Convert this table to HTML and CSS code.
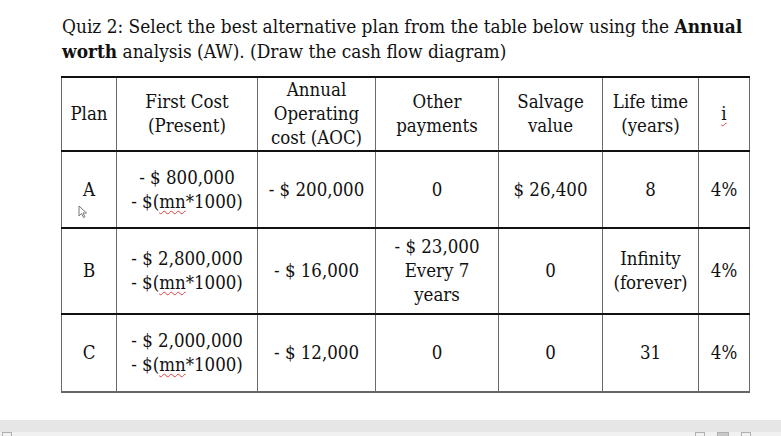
FILE: index.html
```html
<!DOCTYPE html>
<html>
<head>
<meta charset="utf-8">
<link rel="stylesheet" href="styles.css">
</head>
<body>
<div class="page">
  <div class="doc">
    <p class="title">Quiz 2: Select the best alternative plan from the table below using the <b>Annual</b><br><b>worth</b> analysis (AW). (Draw the cash flow diagram)</p>
    <table class="grid">
      <colgroup>
        <col class="c1"><col class="c2"><col class="c3"><col class="c4"><col class="c5"><col class="c6"><col class="c7">
      </colgroup>
      <tr class="head">
        <td>Plan</td>
        <td>First Cost<br>(Present)</td>
        <td>Annual<br>Operating<br>cost (AOC)</td>
        <td>Other<br>payments</td>
        <td>Salvage<br>value</td>
        <td>Life time<br>(years)</td>
        <td><span class="spell">i</span></td>
      </tr>
      <tr class="ra">
        <td>A</td>
        <td>- $ 800,000<br>- $(<span class="spell">mn</span>*1000)</td>
        <td>- $ 200,000</td>
        <td>0</td>
        <td>$ 26,400</td>
        <td>8</td>
        <td>4%</td>
      </tr>
      <tr class="rb">
        <td>B</td>
        <td>- $ 2,800,000<br>- $(<span class="spell">mn</span>*1000)</td>
        <td>- $ 16,000</td>
        <td>- $ 23,000<br>Every 7<br>years</td>
        <td>0</td>
        <td>Infinity<br>(forever)</td>
        <td>4%</td>
      </tr>
      <tr class="rc">
        <td>C</td>
        <td>- $ 2,000,000<br>- $(<span class="spell">mn</span>*1000)</td>
        <td>- $ 12,000</td>
        <td>0</td>
        <td>0</td>
        <td>31</td>
        <td>4%</td>
      </tr>
    </table>
  </div>
  <div class="status">
    <div class="band"></div>
    <div class="strip">
      <span class="tiny left"></span>
      <span class="icons">
        <span class="tiny"></span>
        <span class="tiny on"></span>
        <span class="tiny"></span>
      </span>
    </div>
  </div>
  <svg class="cursor" width="10" height="14" viewBox="0 0 10 14"><path d="M1 1 L1 11 L3.5 8.5 L5.5 12.5 L7 11.8 L5 8 L8.5 8 Z" fill="#fff" stroke="#777" stroke-width="1"/></svg>
</div>
</body>
</html>
```

FILE: styles.css
```css
html, body {
  margin: 0;
  padding: 0;
  background: #fff;
}
.page {
  position: relative;
  width: 781px;
  height: 436px;
  display: flex;
  flex-direction: column;
  overflow: hidden;
  font-family: "DejaVu Serif Condensed", "DejaVu Serif", serif;
  font-stretch: condensed;
  color: #111;
}
.doc {
  flex: 1;
  padding: 14px 0 0 61px;
}
.title {
  margin: 0 0 0 1px;
  font-size: 18.9px;
  line-height: 25px;
  white-space: nowrap;
}
.grid {
  margin-top: 12px;
  border-collapse: collapse;
  table-layout: fixed;
  width: 689px;
  font-size: 18.5px;
  line-height: 24px;
}
.c1 { width: 55px; }
.c2 { width: 141px; }
.c3 { width: 118px; }
.c4 { width: 123px; }
.c5 { width: 104px; }
.c6 { width: 96px; }
.c7 { width: 51px; }
.grid td {
  padding: 0;
  text-align: center;
  vertical-align: middle;
  border-left: 1px solid #6a6a6a;
  border-right: 1px solid #6a6a6a;
  border-top: 2px solid #111;
  white-space: nowrap;
}
.head td { height: 71px; }
.ra td { height: 75px; }
.rb td { height: 84px; }
.rc td { height: 76px; border-bottom: 2px solid #666; }
.spell {
  text-decoration: underline wavy #e04040;
  text-decoration-thickness: 1px;
  text-underline-offset: 2px;
}
.status {
  height: 16px;
  display: flex;
  flex-direction: column;
}
.band {
  height: 12px;
  background: #e6e6e6;
}
.strip {
  flex: 1;
  background: #f1f1f1;
  display: flex;
  justify-content: space-between;
  align-items: flex-start;
  padding: 0 30px 0 2px;
}
.icons {
  display: flex;
  gap: 12px;
}
.tiny {
  width: 8px;
  height: 3px;
  border: 1px solid #b0b0b0;
  border-bottom: none;
}
.tiny.on {
  background: #c8c8c8;
  width: 10px;
}
.cursor {
  position: absolute;
  left: 78px;
  top: 205px;
}
```
